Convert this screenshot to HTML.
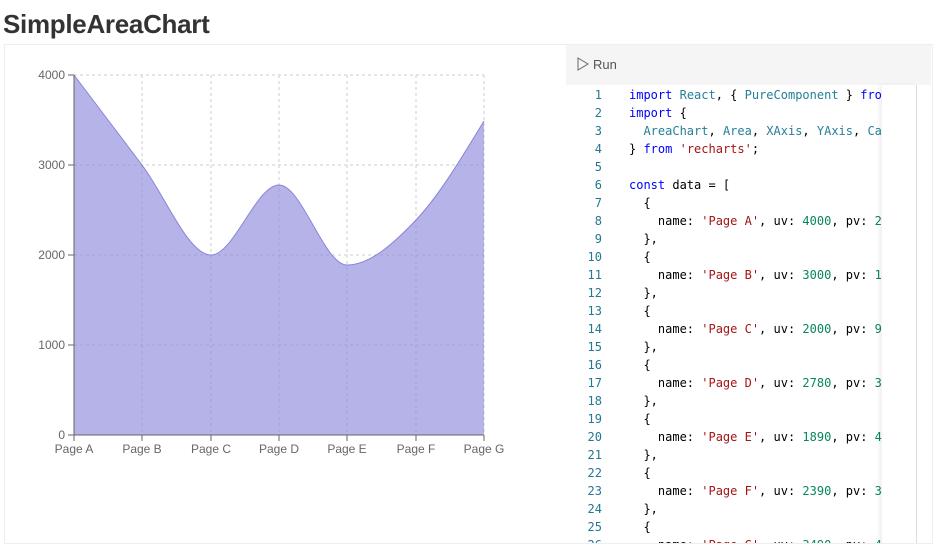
<!DOCTYPE html>
<html><head><meta charset="utf-8"><style>
body{margin:0;width:946px;height:555px;background:#fff;font-family:"Liberation Sans",sans-serif;overflow:hidden;position:relative}
h1{position:absolute;left:3px;top:9px;margin:0;font-size:26px;font-weight:bold;color:#333;font-family:"Liberation Sans",sans-serif;letter-spacing:-0.3px}
.box{position:absolute;left:4px;top:44px;width:927px;height:498px;border:1px solid #eee}
.code{position:absolute;left:566px;top:45px;width:365px;height:498px;overflow:hidden}
.hdr{height:40px;background:#f5f5f5;position:relative;color:#555;font-size:13px}
.hdr span{position:absolute;left:27px;top:12px}
.ln{position:absolute;left:0;top:40px;width:36px;text-align:right;font:12px/18px "DejaVu Sans Mono",monospace;color:#237893;padding-top:1px}
.src{position:absolute;left:63px;top:40px;font:12px/18px "DejaVu Sans Mono",monospace;color:#000;white-space:pre;padding-top:1px}
.k{color:#0000ff}.t{color:#267f99}.s{color:#a31515}.n{color:#098658}
.mm{position:absolute;left:316px;top:40px;width:34px;height:460px;background:#fff;box-shadow:-3px 0 4px rgba(0,0,0,.06);border-right:1px solid #ddd}
.rest{position:absolute;left:351px;top:40px;width:20px;height:460px;background:#fff}
</style></head><body>
<h1>SimpleAreaChart</h1>
<div class="box"></div>
<svg style="position:absolute;left:0;top:0" width="560" height="555">
<g stroke="#ccc" stroke-dasharray="3 3" fill="none">
<line x1="74" y1="75" x2="484" y2="75"/><line x1="74" y1="165" x2="484" y2="165"/><line x1="74" y1="255" x2="484" y2="255"/><line x1="74" y1="345" x2="484" y2="345"/>
<line x1="142" y1="75" x2="142" y2="435"/><line x1="211" y1="75" x2="211" y2="435"/><line x1="279" y1="75" x2="279" y2="435"/><line x1="347" y1="75" x2="347" y2="435"/><line x1="416" y1="75" x2="416" y2="435"/><line x1="484" y1="75" x2="484" y2="435"/>
</g>
<path d="M74,75C96.8,105 119.2,135 142,165C164.8,195 188.2,255 211,255C233.8,255 256.2,185 279,185C301.8,185 324.2,265 347,265C369.8,265 393.2,244 416,220C438.8,196 461.2,158.5 484,121L484,435L74,435Z" fill="#8884d8" fill-opacity="0.62"/>
<path d="M74,75C96.8,105 119.2,135 142,165C164.8,195 188.2,255 211,255C233.8,255 256.2,185 279,185C301.8,185 324.2,265 347,265C369.8,265 393.2,244 416,220C438.8,196 461.2,158.5 484,121" fill="none" stroke="#8884d8" stroke-width="1"/>
<g stroke="#666"><line x1="74" y1="75" x2="74" y2="435"/><line x1="74" y1="435" x2="484" y2="435"/>
<line x1="68" y1="75" x2="74" y2="75"/><line x1="68" y1="165" x2="74" y2="165"/><line x1="68" y1="255" x2="74" y2="255"/><line x1="68" y1="345" x2="74" y2="345"/><line x1="68" y1="435" x2="74" y2="435"/>
<line x1="74" y1="435" x2="74" y2="441"/><line x1="142" y1="435" x2="142" y2="441"/><line x1="211" y1="435" x2="211" y2="441"/><line x1="279" y1="435" x2="279" y2="441"/><line x1="347" y1="435" x2="347" y2="441"/><line x1="416" y1="435" x2="416" y2="441"/><line x1="484" y1="435" x2="484" y2="441"/></g>
<g fill="#666" font-size="12" font-family="Liberation Sans,sans-serif" text-anchor="end">
<text x="65" y="79">4000</text><text x="65" y="169">3000</text><text x="65" y="259">2000</text><text x="65" y="349">1000</text><text x="65" y="439">0</text></g>
<g fill="#666" font-size="12" font-family="Liberation Sans,sans-serif" text-anchor="middle">
<text x="74" y="453">Page A</text><text x="142" y="453">Page B</text><text x="211" y="453">Page C</text><text x="279" y="453">Page D</text><text x="347" y="453">Page E</text><text x="416" y="453">Page F</text><text x="484" y="453">Page G</text></g>
</svg>
<div class="code">
<div class="hdr"><svg style="position:absolute;left:11px;top:12px" width="12" height="14"><path d="M1,1L11,7L1,13Z" fill="none" stroke="#666"/></svg><span>Run</span></div>
<div class="ln">1<br>2<br>3<br>4<br>5<br>6<br>7<br>8<br>9<br>10<br>11<br>12<br>13<br>14<br>15<br>16<br>17<br>18<br>19<br>20<br>21<br>22<br>23<br>24<br>25<br>26</div>
<div class="src"><span class="k">import</span> <span class="t">React</span>, { <span class="t">PureComponent</span> } <span class="k">from</span> <span class="s">'react'</span>;
<span class="k">import</span> {
  <span class="t">AreaChart</span>, <span class="t">Area</span>, <span class="t">XAxis</span>, <span class="t">YAxis</span>, <span class="t">CartesianGrid</span>
} <span class="k">from</span> <span class="s">'recharts'</span>;

<span class="k">const</span> data = [
  {
    name: <span class="s">'Page A'</span>, uv: <span class="n">4000</span>, pv: <span class="n">2400</span>
  },
  {
    name: <span class="s">'Page B'</span>, uv: <span class="n">3000</span>, pv: <span class="n">1398</span>
  },
  {
    name: <span class="s">'Page C'</span>, uv: <span class="n">2000</span>, pv: <span class="n">9800</span>
  },
  {
    name: <span class="s">'Page D'</span>, uv: <span class="n">2780</span>, pv: <span class="n">3908</span>
  },
  {
    name: <span class="s">'Page E'</span>, uv: <span class="n">1890</span>, pv: <span class="n">4800</span>
  },
  {
    name: <span class="s">'Page F'</span>, uv: <span class="n">2390</span>, pv: <span class="n">3800</span>
  },
  {
    name: <span class="s">'Page G'</span>, uv: <span class="n">3490</span>, pv: <span class="n">4300</span></div>
<div class="mm"></div>
<div class="rest"></div>
</div>
</body></html>
